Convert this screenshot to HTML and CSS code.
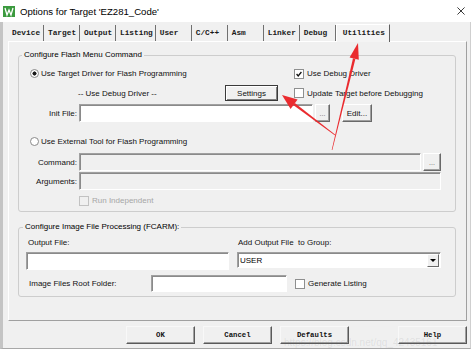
FILE: index.html
```html
<!DOCTYPE html>
<html lang="en">
<head>
  <meta charset="UTF-8" />
  <title>Options for Target 'EZ281_Code'</title>
  <link rel="stylesheet" href="styles.css">
</head>
<body>
  <div class="window">
    <div class="titlebar">
      <svg class="app-icon" viewBox="0 0 12 11">
        <rect x="0" y="0" width="12" height="11" fill="#3b9a3e" />
        <polyline points="2,2 4,9 6,4 8,9 10,2" fill="none" stroke="#fff" stroke-width="1.3" />
      </svg>
      <span class="title">Options for Target 'EZ281_Code'</span>
      <svg class="close" viewBox="0 0 9 9">
        <line x1="0.5" y1="0.5" x2="8.5" y2="8.5" stroke="#222" stroke-width="1" />
        <line x1="8.5" y1="0.5" x2="0.5" y2="8.5" stroke="#222" stroke-width="1" />
      </svg>
    </div>
    <div class="client">
      <div class="tabs">
        <span class="tab">Device</span>
        <span class="tab">Target</span>
        <span class="tab">Output</span>
        <span class="tab">Listing</span>
        <span class="tab">User</span>
        <span class="tab">C/C++</span>
        <span class="tab">Asm</span>
        <span class="tab">Linker</span>
        <span class="tab">Debug</span>
        <span class="tab active">Utilities</span>
      </div>
      <div class="panel">
        <fieldset class="group flash">
          <legend>Configure Flash Menu Command</legend>
          <div class="row r1">
            <label class="opt main"><span class="radio on"></span>Use Target Driver for Flash Programming</label>
            <label class="opt"><span class="check on"><svg viewBox="0 0 10 10"><polyline points="2,5 4,7.5 8,2.5" fill="none" stroke="#111" stroke-width="1.6" /></svg></span>Use Debug Driver</label>
          </div>
          <div class="row r2">
            <div class="driver-note"><span>-- Use Debug Driver --</span></div>
            <span class="btn settings">Settings</span>
            <label class="opt update"><span class="check"></span>Update Target before Debugging</label>
          </div>
          <div class="row r3">
            <span class="label">Init File:</span>
            <span class="field init"></span>
            <span class="btn dots">...</span>
            <span class="btn edit">Edit...</span>
          </div>
          <div class="row r4">
            <label class="opt"><span class="radio"></span>Use External Tool for Flash Programming</label>
          </div>
          <div class="row r5">
            <span class="label">Command:</span>
            <span class="field off command"></span>
            <span class="btn dots wide">...</span>
          </div>
          <div class="row r6">
            <span class="label">Arguments:</span>
            <span class="field off args"></span>
          </div>
          <div class="row r7">
            <label class="opt disabled"><span class="check off"></span>Run Independent</label>
          </div>
        </fieldset>
        <fieldset class="group image">
          <legend>Configure Image File Processing (FCARM):</legend>
          <div class="image-grid">
            <span class="caption">Output File:</span>
            <span class="caption right">Add Output File&nbsp; to Group:</span>
            <span class="field"></span>
            <span class="field select">USER<span class="drop"><span class="tri"></span></span></span>
            <div class="root-row">
              <span class="root-label">Image Files Root Folder:</span>
              <span class="field root"></span>
              <label class="opt listing"><span class="check"></span>Generate Listing</label>
            </div>
          </div>
        </fieldset>
      </div>
      <div class="buttons">
        <span class="btn cmd ok">OK</span>
        <span class="btn cmd">Cancel</span>
        <span class="btn cmd">Defaults</span>
        <span class="btn cmd help">Help</span>
      </div>
    </div>
    <svg class="arrows" viewBox="0 0 474 351">
      <polygon points="355.4,58.9 353.0,58.3 331.7,149.9 332.3,150.1" fill="#ea2b2f" />
      <polygon points="358,43 358.8,59.8 349.6,57.4" fill="#ea2b2f" />
      <polygon points="294.8,103.0 293.2,105.0 334.7,135.2 335.3,134.8" fill="#ea2b2f" />
      <polygon points="282,95 297.6,99.5 290.6,109.0" fill="#ea2b2f" />
    </svg>
    <div class="watermark">https://blog.csdn.net/qq_42435161</div>
  </div>
</body>
</html>
```

FILE: styles.css
```css
html, body {
  margin: 0;
  padding: 0;
}
body {
  background: #fff;
  font-family: "Liberation Sans", Arial, sans-serif;
  font-size: 8px;
  color: #111;
}
.window {
  position: relative;
  width: 474px;
  height: 351px;
  display: flex;
  flex-direction: column;
  background: #fff;
  overflow: hidden;
}
.titlebar {
  height: 22px;
  display: flex;
  align-items: center;
  background: #fff;
}
.app-icon {
  width: 12px;
  height: 11px;
  margin-left: 3px;
  margin-right: 5px;
}
.title {
  font-size: 9.6px;
  color: #000;
}
.close {
  width: 8px;
  height: 8px;
  margin-left: auto;
  margin-right: 9px;
}
.client {
  flex: 1;
  display: flex;
  flex-direction: column;
  background: #f0f0f0;
  border-left: 3px solid #c4c4c4;
  border-right: 1px solid #cfcfcf;
  border-bottom: 1px solid #a8a8a8;
  padding: 0 3px 0 5px;
  margin: 0 3px 2px 0;
}
.tabs {
  height: 19px;
  display: flex;
  align-items: flex-end;
  font-family: "Liberation Mono", "Courier New", monospace;
  font-size: 7.8px;
  font-weight: bold;
}
.tab {
  box-sizing: border-box;
  min-width: 36px;
  height: 16px;
  line-height: 16px;
  padding-left: 4px;
  padding-right: 2px;
  border-right: 1px solid #707070;
  color: #1a1a1a;
}
.tab.active {
  min-width: 54px;
  height: 18px;
  line-height: 17px;
  padding-left: 6px;
  margin-bottom: -1px;
  background: #f4f4f4;
  border-top: 1px solid #fff;
  border-left: 1px solid #fff;
  border-right: 1px solid #606060;
  position: relative;
  z-index: 1;
}
.panel {
  box-sizing: border-box;
  height: 280px;
  border: 1px solid;
  border-color: #fff #a0a0a0 #a0a0a0 #fff;
  padding: 7px 10px 0 9px;
}
.group {
  margin: 0;
  border: 1px solid #cdcdcd;
  border-radius: 3px;
  display: flex;
  flex-direction: column;
}
.group legend {
  padding: 0 2px;
  line-height: 12px;
  height: 12px;
  color: #000;
}
.flash {
  padding: 0 10px 4px 11px;
}
.flash legend {
  margin-left: -8px;
}
.image {
  margin-top: 9px;
  padding: 0 10px 4px 7px;
}
.image legend {
  margin-left: -3px;
}
.row {
  display: flex;
  align-items: center;
}
.r1 { margin-top: 6px; height: 13px; }
.r2 { margin-top: 5px; height: 16px; }
.r3 { margin-top: 3px; height: 18px; }
.r4 { margin-top: 13px; height: 13px; }
.r5 { margin-top: 5px; height: 18px; }
.r6 { margin-top: 1px; height: 18px; }
.r7 { margin-top: 4px; height: 13px; }
.opt {
  display: flex;
  align-items: center;
  white-space: nowrap;
}
.opt.main {
  width: 264px;
}
.opt.disabled {
  margin-left: 49px;
  color: #a6a6a6;
}
.radio {
  box-sizing: border-box;
  width: 9px;
  height: 9px;
  border-radius: 50%;
  border: 1px solid #8a8a8a;
  background: #fff;
  margin-right: 2px;
}
.radio.on {
  background: radial-gradient(circle, #1a1a1a 0 1.8px, #fff 2.3px);
}
.check {
  box-sizing: border-box;
  width: 10px;
  height: 10px;
  border: 1px solid #8e8f8f;
  background: #fff;
  margin-right: 3px;
  display: flex;
}
.check svg {
  width: 8px;
  height: 8px;
}
.check.off {
  border-color: #c2c2c2;
  background: #f0f0f0;
}
.driver-note {
  width: 195px;
  padding-left: 48px;
  box-sizing: border-box;
}
.update {
  margin-left: 16px;
}
.label {
  width: 47px;
  margin-right: 2px;
  text-align: right;
}
.field {
  box-sizing: border-box;
  height: 18px;
  background: #fff;
  border: 1px solid;
  border-color: #a0a0a0 #fff #fff #a0a0a0;
  box-shadow: inset 1px 1px 0 #8a8a8a;
}
.field.off {
  background: #f0f0f0;
}
.init { width: 234px; }
.command { width: 342px; }
.args { width: 362px; }
.btn {
  box-sizing: border-box;
  display: flex;
  align-items: center;
  justify-content: center;
  background: #f0f0f0;
  border: 1px solid;
  border-color: #fff #696969 #696969 #fff;
  box-shadow: inset -1px -1px 0 #a0a0a0;
  color: #111;
}
.settings {
  width: 53px;
  height: 16px;
  border-color: #3a3a3a;
  box-shadow: inset 1px 1px 0 #fff, inset -1px -1px 0 #808080;
}
.dots {
  width: 15px;
  height: 18px;
  margin-left: 2px;
  color: #666;
  font-size: 7px;
}
.dots.wide {
  width: 18px;
}
.edit {
  width: 30px;
  height: 18px;
  margin-left: 12px;
}
.image-grid {
  display: grid;
  grid-template-columns: 203px 204px;
  column-gap: 8px;
}
.caption {
  margin-top: 4px;
  height: 12px;
  line-height: 12px;
  padding-left: 2px;
}
.caption.right {
  padding-left: 1px;
}
.image-grid .field {
  margin-top: 3px;
}
.select {
  display: flex;
  align-items: center;
  padding-left: 2px;
  height: 16px;
  color: #000;
}
.drop {
  margin-left: auto;
  margin-right: 1px;
  box-sizing: border-box;
  width: 12px;
  height: 13px;
  background: #f0f0f0;
  border: 1px solid;
  border-color: #fff #696969 #696969 #fff;
  display: flex;
  align-items: center;
  justify-content: center;
}
.tri {
  width: 0;
  height: 0;
  border-left: 3px solid transparent;
  border-right: 3px solid transparent;
  border-top: 3px solid #000;
}
.root-row {
  grid-column: 1 / 3;
  display: flex;
  align-items: center;
  margin-top: 5px;
  height: 17px;
}
.root-label {
  width: 122px;
  padding-left: 3px;
}
.image-grid .field.root {
  width: 136px;
  height: 17px;
  margin-top: 0;
}
.listing {
  margin-left: 8px;
}
.buttons {
  display: flex;
  margin-top: 5px;
  font-family: "Liberation Mono", "Courier New", monospace;
  font-size: 7.3px;
  font-weight: bold;
}
.cmd {
  width: 69px;
  height: 18px;
  margin-left: 8px;
  border-color: #f8f8f8 #5a5a5a #5a5a5a #f8f8f8;
}
.cmd.ok { margin-left: 118px; }
.cmd.help { margin-left: 49px; }
.arrows {
  position: absolute;
  left: 0;
  top: 0;
  width: 474px;
  height: 351px;
  pointer-events: none;
}
.watermark {
  position: absolute;
  left: 284px;
  top: 338px;
  font-family: "Liberation Sans", Arial, sans-serif;
  font-size: 10px;
  line-height: 10px;
  color: rgba(120, 120, 120, 0.14);
  white-space: nowrap;
}
```
